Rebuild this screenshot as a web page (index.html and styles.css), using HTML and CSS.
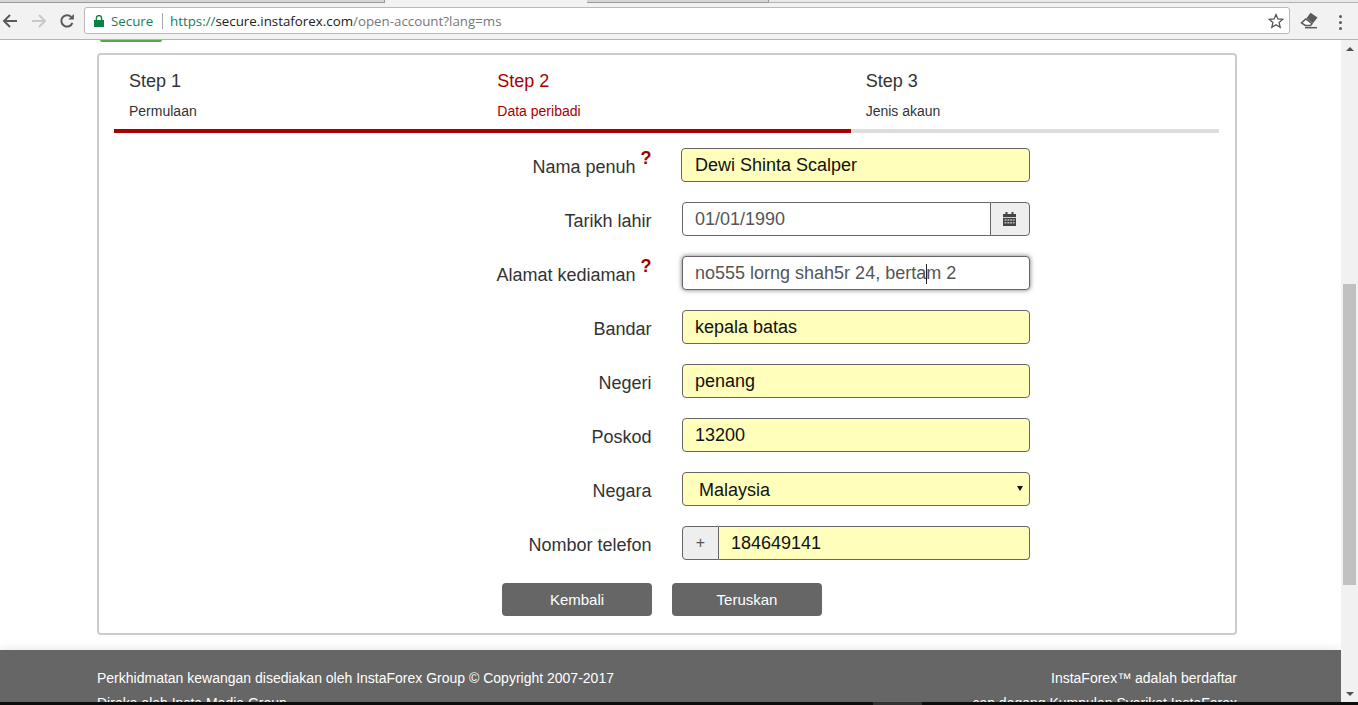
FILE: index.html
```html
<!DOCTYPE html>
<html lang="ms">
<head>
<meta charset="utf-8">
<title>InstaForex - Open account</title>
<link rel="stylesheet" href="styles.css">
</head>
<body>
<header class="chrome">
  <div class="tabs">
    <div class="tab tab-a"></div>
    <div class="tab tab-b"></div>
    <div class="tab tab-active"></div>
    <div class="tab tab-b"></div>
    <div class="tab-rest"></div>
  </div>
  <div class="toolbar">
    <svg class="nav nav-back" viewBox="0 0 16 16"><path d="M15 8H2.5M8 2 2 8l6 6" fill="none" stroke="#5a5a5a" stroke-width="2"/></svg>
    <svg class="nav nav-fwd" viewBox="0 0 16 16"><path d="M1 8h12.5M8 2l6 6-6 6" fill="none" stroke="#c8c8c8" stroke-width="2"/></svg>
    <svg class="nav nav-reload" viewBox="0 0 16 16"><path d="M13.4 9.8A5.7 5.7 0 1 1 12.2 4" fill="none" stroke="#5a5a5a" stroke-width="2"/><path d="M9.3 6.6h5.6V1z" fill="#5a5a5a"/></svg>
    <div class="omnibox">
      <svg class="lock" viewBox="0 0 10 12"><path d="M0 5h10v7H0z" fill="#0b8043"/><path d="M2.4 5.5V3.2a2.6 2.6 0 0 1 5.2 0v2.3" fill="none" stroke="#0b8043" stroke-width="1.4"/></svg>
      <span class="secure">Secure</span>
      <span class="sep"></span>
      <span class="url"><span class="scheme">https://</span><span class="host">secure.instaforex.com</span>/open-account?lang=ms</span>
      <svg class="star" viewBox="0 0 16 16"><path d="M8 1.6 9.9 6l4.8.4-3.6 3.2 1.1 4.7L8 11.8l-4.2 2.5 1.1-4.7L1.300 6.400 6.100 6z" fill="none" stroke="#555" stroke-width="1.300"/></svg>
    </div>
    <svg class="eraser" viewBox="0 0 18 17"><path d="M10.500 0.800 17.500 5.500 13 11.200 6.500 6.300z" fill="#5a5a5a"/><path d="M5.800 6.900 12 11.700 10.500 13.500H5.300L1.500 11z" fill="#fff" stroke="#5a5a5a" stroke-width="1.500"/><path d="M5 15.700h12" stroke="#5a5a5a" stroke-width="1.500"/></svg>
    <div class="menu"><i></i><i></i><i></i></div>
  </div>
</header>
<div class="viewport">
  <main class="page">
    <div class="pill"></div>
    <section class="panel">
      <ol class="steps">
        <li class="step"><div class="step-title">Step 1</div><div class="step-sub">Permulaan</div></li>
        <li class="step step-active"><div class="step-title">Step 2</div><div class="step-sub">Data peribadi</div></li>
        <li class="step"><div class="step-title">Step 3</div><div class="step-sub">Jenis akaun</div></li>
      </ol>
      <form class="form">
        <div class="row">
          <label class="label">Nama penuh <span class="hint">?</span></label>
          <div class="field field-fill field-wide">Dewi Shinta Scalper</div>
        </div>
        <div class="row">
          <label class="label">Tarikh lahir</label>
          <div class="group">
            <div class="field field-grow field-joined-right field-muted">01/01/1990</div>
            <div class="addon addon-right">
              <svg class="cal" viewBox="0 0 13 14"><path d="M0 2h13v3H0z" fill="#444"/><path d="M2.500 0h2v3h-2zM8.500 0h2v3h-2z" fill="#444"/><path d="M0 5.800h13V14H0z" fill="#444"/><path d="M1.500 7.200h2v1.500h-2zM4.400 7.200h2v1.500h-2zM7.200 7.200h2v1.500h-2zM10 7.200h1.600v1.500H10zM1.500 10h2v1.500h-2zM4.400 10h2v1.500h-2zM7.200 10h2v1.500h-2zM10 10h1.600v1.500H10z" fill="#bbb"/></svg>
            </div>
          </div>
        </div>
        <div class="row">
          <label class="label">Alamat kediaman <span class="hint">?</span></label>
          <div class="field field-focus field-muted">no555 lorng shah5r 24, berta<span class="caret"></span>m 2</div>
        </div>
        <div class="row">
          <label class="label">Bandar</label>
          <div class="field field-fill">kepala batas</div>
        </div>
        <div class="row">
          <label class="label">Negeri</label>
          <div class="field field-fill">penang</div>
        </div>
        <div class="row">
          <label class="label">Poskod</label>
          <div class="field field-fill">13200</div>
        </div>
        <div class="row">
          <label class="label">Negara</label>
          <div class="field field-fill field-select">Malaysia<span class="select-arrow"></span></div>
        </div>
        <div class="row">
          <label class="label">Nombor telefon</label>
          <div class="group">
            <div class="addon addon-left">+</div>
            <div class="field field-fill field-grow field-joined-left">184649141</div>
          </div>
        </div>
        <div class="actions">
          <button type="button" class="btn">Kembali</button>
          <button type="button" class="btn">Teruskan</button>
        </div>
      </form>
    </section>
    <footer class="footer">
      <div class="foot-left">
        <div>Perkhidmatan kewangan disediakan oleh InstaForex Group © Copyright 2007-2017</div>
        <div>Direka oleh Insta Media Group</div>
      </div>
      <div class="foot-right">
        <div>InstaForex™ adalah berdaftar</div>
        <div>cap dagang Kumpulan Syarikat InstaForex</div>
      </div>
    </footer>
  </main>
  <aside class="scrollbar">
    <div class="sb-btn"><span class="sb-up"></span></div>
    <div class="sb-thumb"></div>
    <div class="sb-space"></div>
    <div class="sb-btn"><span class="sb-down"></span></div>
  </aside>
</div>
<div class="taskbar"><div class="task-item"></div></div>
</body>
</html>
```

FILE: styles.css
```css
* { box-sizing: border-box; }
html, body { margin: 0; padding: 0; height: 705px; overflow: hidden; background: #fff; }
body { font-family: "Liberation Sans", Arial, sans-serif; color: #333; display: flex; flex-direction: column; }

/* browser chrome */
.chrome { height: 40px; flex: none; background: #f2f2f2; border-bottom: 1px solid #b4b4b4; }
.tabs { display: flex; height: 3px; }
.tab { height: 3px; background: #d6d6d6; border-bottom: 1px solid #9a9a9a; }
.tab-a { width: 203px; }
.tab-b { width: 182px; border-right: 1px solid #9a9a9a; }
.tab-active { width: 202px; background: #f2f2f2; border-bottom: 0; }
.tab-rest { flex: 1; background: #e8e8e8; border-bottom: 1px solid #b4b4b4; }
.toolbar { display: flex; align-items: flex-start; height: 36px; padding-top: 4px; position: relative; }
.nav { flex: none; width: 16px; height: 16px; margin-top: 6px; }
.nav-back { margin-left: 2px; }
.nav-fwd { margin-left: 13px; }
.nav-reload { margin-left: 12px; }
.omnibox { flex: none; display: flex; align-items: center; margin-left: 9px; width: 1206px; height: 27px; background: #fff; border: 1px solid #b9b9b9; border-radius: 3px; font-family: "Open Sans", sans-serif; font-size: 13.33px; color: #777; padding-left: 9px; white-space: nowrap; }
.lock { width: 10px; height: 12px; flex: none; }
.secure { color: #1b7a5e; margin-left: 7px; width: 44px; }
.sep { width: 1px; height: 16px; background: #aaa; margin: 0 7px 0 7px; }
.url { flex: 1; }
.scheme { color: #1b7a5e; }
.host { color: #222; }
.star { width: 16px; height: 16px; margin-right: 5px; flex: none; }
.eraser { flex: none; width: 18px; height: 17px; margin: 5px 0 0 10px; }
.menu { flex: none; margin: 8px 0 0 21px; display: flex; flex-direction: column; gap: 3px; }
.menu i { display: block; width: 3px; height: 3px; border-radius: 50%; background: #5a5a5a; }

/* viewport */
.viewport { flex: none; height: 662px; display: flex; overflow: hidden; }
.page { flex: none; width: 1341px; height: 662px; overflow: hidden; }
.pill { width: 62px; height: 2px; margin-left: 100px; background: #4caf3f; border-radius: 0 0 6px 6px; }
.panel { width: 1140px; height: 582px; margin: 11px 0 0 97px; border: 2px solid #ccc; border-radius: 4px; background: #fff; }

/* steps */
.steps { list-style: none; margin: 0; padding: 0 16px 0 15px; display: grid; grid-template-columns: repeat(3, 1fr); }
.step { padding: 14px 0 8px 15px; border-bottom: 4px solid #ddd; }
.step:first-child, .step-active { border-bottom-color: #a80000; }
.step-title { font-size: 18px; line-height: 24px; }
.step-sub { font-size: 14px; line-height: 20px; margin-top: 8px; }
.step-active { color: #a80000; }

/* form */
.form { margin-top: 15px; display: flex; flex-direction: column; gap: 20px; }
.row { display: grid; grid-template-columns: 553px 348px; column-gap: 30px; height: 34px; }
.label { text-align: right; font-size: 18px; line-height: 34px; padding: 2px 0.5px 0 0; color: #333; white-space: nowrap; }
.hint { display: inline-block; color: #a00000; font-weight: bold; line-height: 0; vertical-align: 9px; }
.field { position: relative; height: 34px; padding: 0 12px; font-size: 18px; line-height: 32px; color: #111; background: #fff; border: 1px solid #666; border-radius: 4px; white-space: nowrap; }
.field-fill { background: #ffffbb; }
.field-wide { margin-left: -1px; padding-left: 13px; }
.field-muted { color: #555; }
.field-focus { box-shadow: 0 0 5px rgba(0,0,0,.55); }
.field-grow { flex: 1; min-width: 0; }
.field-joined-right { border-radius: 4px 0 0 4px; }
.field-joined-left { border-radius: 0 4px 4px 0; border-left: 0; }
.field-select { padding-left: 16px; line-height: 34px; }
.select-arrow { position: absolute; right: 6px; top: 13px; border: 3px solid transparent; border-top: 5px solid #111; border-bottom: 0; }
.caret { display: inline-block; width: 1px; height: 20px; margin-right: -1px; background: #222; vertical-align: -5px; }
.group { display: flex; height: 34px; }
.addon { flex: none; display: flex; align-items: center; justify-content: center; height: 34px; background: #eee; border: 1px solid #666; color: #555; font-size: 16px; }
.addon-right { width: 40px; border-left: 1px solid #666; margin-left: -1px; border-radius: 0 4px 4px 0; padding-right: 2px; }
.addon-left { width: 37px; border-radius: 4px 0 0 4px; }
.cal { width: 13px; height: 14px; }
.actions { display: flex; gap: 20px; margin: 3px 0 0 403px; }
.btn { width: 150px; height: 33px; padding: 0; border: 0; border-radius: 4px; background: #666; color: #fff; font: 15px "Liberation Sans", Arial, sans-serif; }

/* footer */
.footer { display: flex; justify-content: space-between; height: 52px; margin-top: 15px; padding: 16px 104px 0 97px; overflow: hidden; background: #666; color: #fff; font-size: 14px; line-height: 25px; box-shadow: 0 -2px 8px rgba(0,0,0,.08); }
.foot-right { text-align: right; }

/* scrollbar */
.scrollbar { flex: none; width: 17px; height: 662px; background: #f1f1f1; display: flex; flex-direction: column; }
.sb-btn { flex: none; height: 17px; display: flex; align-items: center; justify-content: center; }
.sb-up { border: 4px solid transparent; border-top: 0; border-bottom: 4px solid #505050; }
.sb-down { border: 4px solid transparent; border-bottom: 0; border-top: 4px solid #505050; }
.sb-thumb { flex: none; height: 301px; margin: 227px 2px 0; background: #c1c1c1; }
.sb-space { flex: 1; }

/* taskbar sliver */
.taskbar { flex: none; height: 3px; background: #0d0d0d; padding-left: 873px; }
.task-item { width: 49px; height: 3px; background: #333; }
```
